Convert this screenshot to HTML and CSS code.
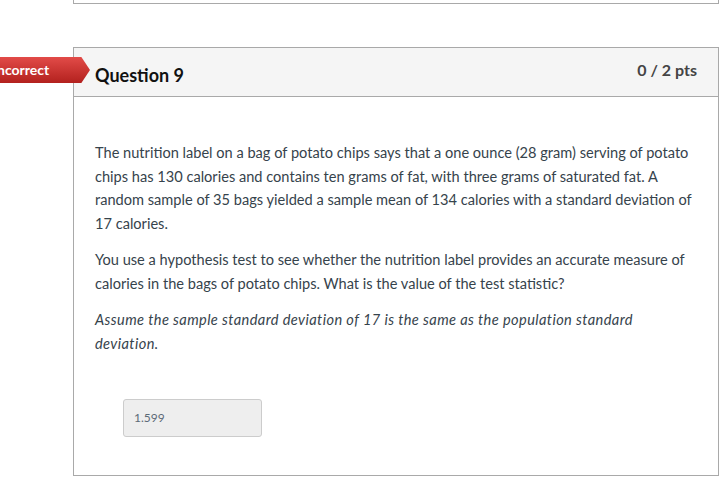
FILE: index.html
```html
<!DOCTYPE html>
<html lang="en">
<head>
    <meta charset="UTF-8">
    <title>Quiz Results - Question 9</title>
    <link rel="stylesheet" href="styles.css">
</head>
<body>
    <div class="quiz">
        <div class="question prev-question"></div>

        <div class="question">
            <span class="answer-tag">Incorrect</span>
            <div class="question-header">
                <h3 class="question-name">Question 9</h3>
                <div class="question-points">0 / 2 pts</div>
            </div>
            <div class="question-body">
                <p>The nutrition label on a bag of potato chips says that a one ounce (28 gram) serving of potato chips has 130 calories and contains ten grams of fat, with three grams of saturated fat. A random sample of 35 bags yielded a sample mean of 134 calories with a standard deviation of 17 calories.</p>
                <p>You use a hypothesis test to see whether the nutrition label provides an accurate measure of calories in the bags of potato chips. What is the value of the test statistic?</p>
                <p class="note">Assume the sample standard deviation of 17 is the same as the population standard deviation.</p>
                <div class="answer-box">1.599</div>
            </div>
        </div>
    </div>
</body>
</html>
```

FILE: styles.css
```css
body {
    font-family: 'Lato', 'Liberation Sans', sans-serif;
    margin: 0;
    padding: 0;
    background-color: #fff;
    color: #2d3b45;
}

.quiz {
    padding: 0 5px 0 73px;
}

.question {
    position: relative;
    border: 1px solid #a9a9a9;
    width: 644px;
}

.prev-question {
    border-top: none;
    height: 3px;
    margin-bottom: 43px;
}

/* Red "Incorrect" ribbon hanging off the left edge */
.answer-tag {
    position: absolute;
    top: 9px;
    left: -92px;
    height: 26px;
    width: 108px;
    box-sizing: border-box;
    padding: 0 0 0 11px;
    line-height: 26px;
    font-size: 14px;
    font-weight: bold;
    color: #fff;
    background: linear-gradient(#e24b48, #b3211e);
    clip-path: polygon(0 0, 92% 0, 100% 50%, 92% 100%, 0 100%);
    z-index: 2;
}

.question-header {
    display: flex;
    justify-content: space-between;
    align-items: flex-start;
    height: 49px;
    box-sizing: border-box;
    padding: 0 21px;
    background-color: #f5f5f5;
    border-bottom: 1px solid #a9a9a9;
}

.question-name {
    margin: 16px 0 0;
    font-size: 18px;
    line-height: 22px;
    color: #111;
}

.question-points {
    margin-top: 12px;
    font-size: 16px;
    font-weight: bold;
    line-height: 20px;
    color: #444;
}

.question-body {
    padding: 44px 21px 38px;
    font-size: 14.6px;
    line-height: 23.5px;
    color: #36434c;
}

.question-body p {
    margin: 0 0 13px;
}

.question-body .note {
    font-style: italic;
    letter-spacing: 0.4px;
    margin-bottom: 0;
}

.answer-box {
    margin: 44px 0 0 28px;
    width: 139px;
    height: 38px;
    box-sizing: border-box;
    padding: 0 10px;
    line-height: 36px;
    font-size: 12px;
    color: #5d6b78;
    background-color: #eee;
    border: 1px solid #ccc;
    border-radius: 3px;
}
```
